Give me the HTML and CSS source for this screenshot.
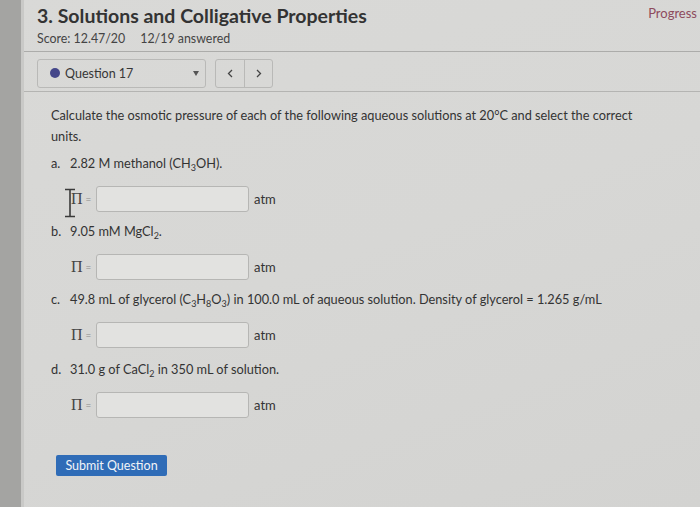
FILE: index.html
```html
<!DOCTYPE html>
<html>
<head>
<meta charset="utf-8">
<link rel="stylesheet" href="styles.css">
</head>
<body>
<div class="page">
  <div class="strip"></div>
  <div class="main">
    <header class="header">
      <div class="titles">
        <h1 class="title">3. Solutions and Colligative Properties</h1>
        <div class="score"><span>Score: 12.47/20</span><span class="answered">12/19 answered</span></div>
      </div>
      <div class="progress">Progress</div>
    </header>
    <div class="toolbar">
      <div class="select">
        <span class="dot"></span>
        <span class="qname">Question 17</span>
        <span class="caret"></span>
      </div>
      <div class="nav">
        <span class="navbtn"><svg width="6" height="9" viewBox="0 0 6 9"><path d="M5 1L1.5 4.5L5 8" stroke="#444" stroke-width="1.3" fill="none"/></svg></span>
        <span class="navbtn"><svg width="6" height="9" viewBox="0 0 6 9"><path d="M1 1L4.5 4.5L1 8" stroke="#444" stroke-width="1.3" fill="none"/></svg></span>
      </div>
    </div>
    <section class="question">
      <p class="prompt">Calculate the osmotic pressure of each of the following aqueous solutions at 20°C and select the correct units.</p>

      <div class="part">
        <div class="label"><span class="letter">a.</span>2.82 M methanol (CH<sub>3</sub>OH).</div>
        <div class="row">
          <span class="sym"><span class="pi">Π</span><span class="eq">=</span>
            <svg class="ibeam" width="12" height="30" viewBox="0 0 12 30"><path d="M1 1.5h10M6 1.5v27M1 28.5h10" stroke="#3a3a3a" stroke-width="1.6" fill="none"/></svg>
          </span>
          <span class="box"></span><span class="unit">atm</span>
        </div>
      </div>

      <div class="part">
        <div class="label"><span class="letter">b.</span>9.05 mM MgCl<sub>2</sub>.</div>
        <div class="row">
          <span class="sym"><span class="pi">Π</span><span class="eq">=</span></span>
          <span class="box"></span><span class="unit">atm</span>
        </div>
      </div>

      <div class="part">
        <div class="label"><span class="letter">c.</span>49.8 mL of glycerol (C<sub>3</sub>H<sub>8</sub>O<sub>3</sub>) in 100.0 mL of aqueous solution. Density of glycerol = 1.265 g/mL</div>
        <div class="row">
          <span class="sym"><span class="pi">Π</span><span class="eq">=</span></span>
          <span class="box"></span><span class="unit">atm</span>
        </div>
      </div>

      <div class="part part-d">
        <div class="label"><span class="letter">d.</span>31.0 g of CaCl<sub>2</sub> in 350 mL of solution.</div>
        <div class="row">
          <span class="sym"><span class="pi">Π</span><span class="eq">=</span></span>
          <span class="box"></span><span class="unit">atm</span>
        </div>
      </div>

      <button class="submit">Submit Question</button>
    </section>
  </div>
</div>
</body>
</html>
```

FILE: styles.css
```css
* { box-sizing: border-box; }
html, body { margin: 0; padding: 0; }
body {
  width: 700px;
  height: 507px;
  overflow: hidden;
  background: #d6d6d4;
  font-family: Lato, "Open Sans", sans-serif;
  color: #333;
}
.page {
  display: flex;
  height: 507px;
  background: linear-gradient(160deg, #d9d9d7 0%, #d7d7d5 50%, #d3d3d1 100%);
}
.strip {
  width: 24px;
  flex: none;
  background: #a4a4a2;
  border-right: 3px solid #c9c9c7;
}
.main {
  flex: 1;
  min-width: 0;
}
.header {
  display: flex;
  justify-content: space-between;
  padding: 5px 3px 0 13px;
  height: 52px;
  border-bottom: 1px solid #acacaa;
}
.title {
  margin: 0;
  font-size: 19.5px;
  line-height: 22px;
  font-weight: 700;
  color: #333;
}
.score {
  margin-top: 4px;
  font-size: 12.4px;
  line-height: 16px;
  color: #444;
}
.answered { margin-left: 15px; }
.progress {
  font-size: 13px;
  line-height: 16px;
  color: #8e4b5d;
}
.toolbar {
  display: flex;
  align-items: center;
  gap: 9px;
  height: 40px;
  padding: 3px 0 0 13px;
  border-bottom: 1px solid #b4b4b2;
}
.select {
  display: flex;
  align-items: center;
  width: 169px;
  height: 29px;
  border: 1px solid #b9b9b7;
  border-radius: 3px;
  padding: 0 6px 0 12px;
}
.dot {
  width: 10px;
  height: 10px;
  border-radius: 50%;
  background: #45478a;
  margin-right: 5px;
}
.qname { font-size: 12.5px; color: #363636; flex: 1; }
.caret {
  width: 0; height: 0;
  border-left: 3.5px solid transparent;
  border-right: 3.5px solid transparent;
  border-top: 5px solid #555;
}
.nav {
  display: flex;
  height: 29px;
  border: 1px solid #b9b9b7;
  border-radius: 3px;
}
.navbtn {
  width: 28px;
  display: flex;
  align-items: center;
  justify-content: center;
}
.navbtn + .navbtn { border-left: 1px solid #b9b9b7; }
.question {
  padding: 13px 0 0 27px;
}
.prompt {
  margin: 0;
  width: 600px;
  font-size: 12.75px;
  line-height: 21px;
  color: #333;
}
.part { margin-top: 6px; }
.part + .part { margin-top: 9px; }
.part + .part-d { margin-top: 11px; }
.label {
  font-size: 12.75px;
  line-height: 21px;
  color: #333;
  white-space: nowrap;
}
.letter { display: inline-block; width: 19px; }
sub { font-size: 9px; line-height: 0; vertical-align: -3px; }
.row {
  display: flex;
  align-items: center;
  margin-top: 12px;
  height: 26px;
}
.sym {
  position: relative;
  width: 45px;
  padding-left: 20px;
  display: flex;
  align-items: center;
}
.pi {
  font-family: "Liberation Serif", serif;
  font-size: 16px;
  color: #444;
}
.eq {
  font-size: 10px;
  color: #8a8a8a;
  margin-left: 3px;
}
.ibeam {
  position: absolute;
  left: 13px;
  top: -2px;
}
.box {
  width: 153px;
  height: 26px;
  background: #e2e2e0;
  border: 1px solid #b6b6b4;
  border-radius: 3px;
}
.unit {
  font-size: 13px;
  margin-left: 5px;
  color: #333;
}
.submit {
  display: block;
  margin: 37px 0 0 5px;
  width: 111px;
  height: 21px;
  padding: 0;
  background: #2f6cb7;
  color: #f2f4f8;
  border: none;
  border-radius: 2px;
  font-family: Lato, "Open Sans", sans-serif;
  font-size: 12.5px;
}
```
